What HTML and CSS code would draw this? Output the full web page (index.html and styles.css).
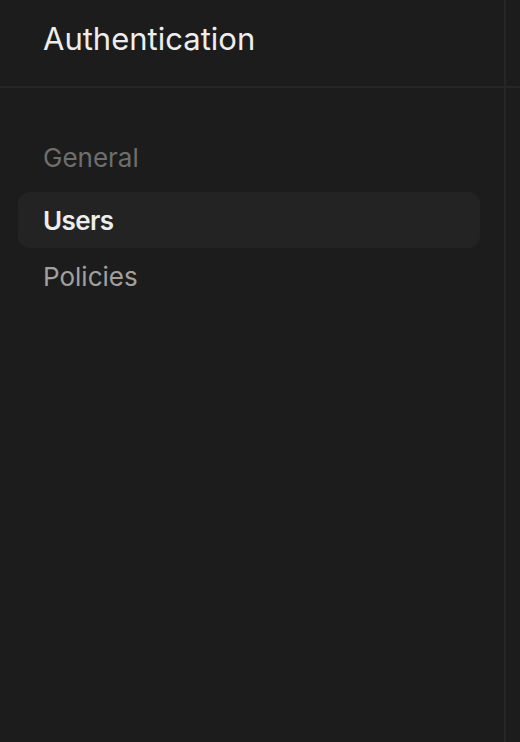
FILE: index.html
```html
<!DOCTYPE html>
<html lang="en">
<head>
<meta charset="utf-8">
<title>Authentication</title>
<link rel="stylesheet" href="styles.css">
</head>
<body>
<div class="layout">
  <aside class="sidebar">
    <header class="sidebar-header">
      <h1 class="title">Authentication</h1>
    </header>
    <nav class="nav">
      <a class="nav-item nav-item--muted" href="#">General</a>
      <a class="nav-item nav-item--active" href="#">Users</a>
      <a class="nav-item" href="#">Policies</a>
    </nav>
  </aside>
  <main class="main">
    <header class="main-header"></header>
  </main>
</div>
</body>
</html>
```

FILE: styles.css
```css
html, body {
  margin: 0;
  padding: 0;
  height: 100%;
  background: #1c1c1c;
}

body {
  font-family: Inter, "Noto Sans", sans-serif;
  color: #ededed;
}

.layout {
  display: flex;
  height: 100%;
}

.sidebar {
  width: 504px;
  flex-shrink: 0;
  border-right: 2px solid #262626;
  display: flex;
  flex-direction: column;
}

.sidebar-header,
.main-header {
  height: 86px;
  border-bottom: 2px solid #262626;
  box-sizing: content-box;
}

.sidebar-header {
  display: flex;
  align-items: center;
  padding-left: 43px;
}

.title {
  margin: 0 0 8px 0;
  font-size: 31px;
  font-weight: 400;
  line-height: 36px;
  color: #ededed;
}

.nav {
  display: flex;
  flex-direction: column;
  padding: 41px 24px 0 18px;
}

.nav-item {
  display: flex;
  align-items: center;
  height: 56px;
  padding-left: 25px;
  border-radius: 12px;
  font-size: 26px;
  font-weight: 400;
  color: #a0a0a0;
  text-decoration: none;
}

.nav-item--muted {
  color: #6e6e6e;
  margin-bottom: 7px;
}

.nav-item--active {
  background: #232323;
  color: #ededed;
  font-weight: 600;
  letter-spacing: -0.6px;
}

.main {
  flex: 1;
}
```
